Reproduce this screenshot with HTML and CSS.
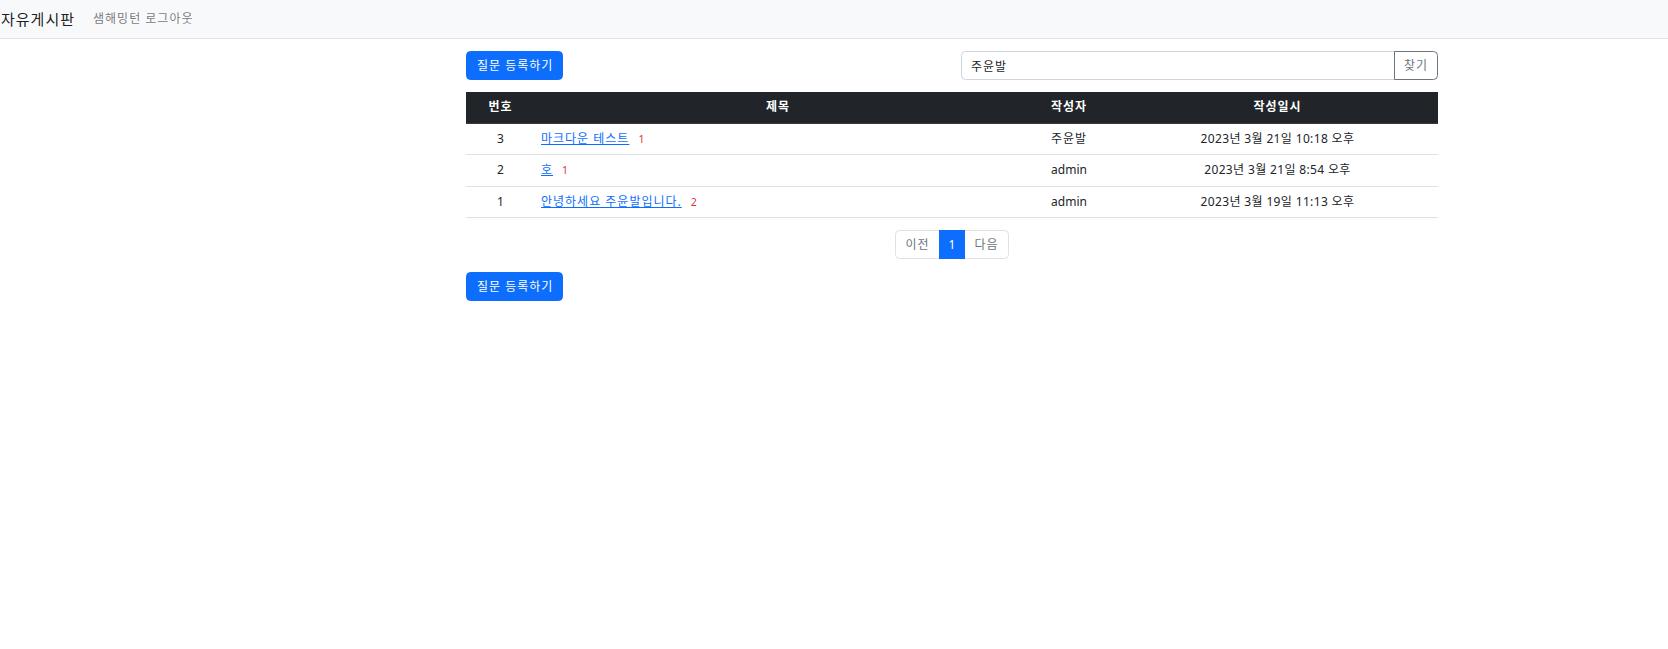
FILE: index.html
```html
<!DOCTYPE html>
<html lang="ko">
<head>
<meta charset="utf-8">
<title>자유게시판</title>
<link rel="stylesheet" href="styles.css">
</head>
<body>
<nav class="navbar">
  <a class="brand ko" href="#">자유게시판</a>
  <a class="nav-link ko" href="#">샘해밍턴 로그아웃</a>
</nav>
<main class="container">
  <div class="top-row">
    <a class="btn btn-primary ko" href="#">질문 등록하기</a>
    <div class="input-group">
      <input class="search-input ko" type="text" value="주윤발">
      <button class="btn btn-outline ko">찾기</button>
    </div>
  </div>
  <table class="board">
    <thead>
      <tr class="ko">
        <th class="c-num">번호</th>
        <th class="c-title">제목</th>
        <th class="c-author">작성자</th>
        <th class="c-date">작성일시</th>
      </tr>
    </thead>
    <tbody>
      <tr>
        <td class="center">3</td>
        <td class="left"><a class="ko" href="#">마크다운 테스트</a><span class="count">1</span></td>
        <td class="center ko">주윤발</td>
        <td class="center date">2023년 3월 21일 10:18 오후</td>
      </tr>
      <tr>
        <td class="center">2</td>
        <td class="left"><a class="ko" href="#">호</a><span class="count">1</span></td>
        <td class="center">admin</td>
        <td class="center date">2023년 3월 21일 8:54 오후</td>
      </tr>
      <tr>
        <td class="center">1</td>
        <td class="left"><a class="ko" href="#">안녕하세요 주윤발입니다.</a><span class="count">2</span></td>
        <td class="center">admin</td>
        <td class="center date">2023년 3월 19일 11:13 오후</td>
      </tr>
    </tbody>
  </table>
  <ul class="pagination">
    <li class="page-item disabled"><span class="page-link ko">이전</span></li>
    <li class="page-item active"><span class="page-link">1</span></li>
    <li class="page-item disabled"><span class="page-link ko">다음</span></li>
  </ul>
  <a class="btn btn-primary ko" href="#">질문 등록하기</a>
</main>
</body>
</html>
```
FILE: styles.css
```css
* { box-sizing: border-box; }
html, body { margin: 0; padding: 0; background: #fff; }
body {
  font-family: "Noto Sans", "Noto Sans CJK KR", sans-serif;
  font-size: 12px;
  line-height: 18px;
  color: #212529;
}
a { color: #0d6efd; }
.ko { letter-spacing: 1px; }
.date { letter-spacing: 0.35px; }

.navbar {
  display: flex;
  align-items: center;
  height: 39px;
  background: #f8f9fa;
  border-bottom: 1px solid #dee2e6;
  padding-left: 1px;
}
.brand {
  font-size: 15px;
  line-height: 22px;
  color: rgba(0,0,0,.9);
  text-decoration: none;
  margin-right: 12px;
}
.nav-link {
  color: rgba(0,0,0,.55);
  text-decoration: none;
  padding: 6px;
}

.container {
  width: 990px;
  padding: 0 9px;
  margin: 12px 0 0 457px;
}
.top-row {
  display: flex;
  justify-content: space-between;
  align-items: flex-start;
  margin-bottom: 12px;
}
.btn {
  display: inline-block;
  font-family: inherit;
  font-size: 12px;
  line-height: 18px;
  padding: 4.5px 9px;
  border: 1px solid transparent;
  border-radius: 4.5px;
  text-decoration: none;
  cursor: pointer;
}
.btn-primary {
  background: #0d6efd;
  border-color: #0d6efd;
  color: #fff;
  padding: 4.5px 9px 4.5px 10px;
}
.input-group {
  display: flex;
  width: 477px;
}
.search-input {
  flex: 1;
  min-width: 0;
  font-family: inherit;
  font-size: 12px;
  line-height: 18px;
  padding: 4.5px 9px;
  color: #212529;
  border: 1px solid #ced4da;
  border-radius: 4.5px 0 0 4.5px;
  outline: none;
  height: 29px;
}
.btn-outline {
  background: #fff;
  color: #6c757d;
  border-color: #6c757d;
  border-radius: 0 4.5px 4.5px 0;
  margin-left: -1px;
  height: 29px;
  width: 44px;
  padding: 4.5px 0;
}

.board {
  width: 100%;
  border-collapse: collapse;
  margin-bottom: 12px;
  table-layout: fixed;
}
.board th {
  background: #212529;
  color: #fff;
  font-weight: 700;
  text-align: center;
  padding: 6px;
  height: 31px;
  line-height: 18px;
  border-bottom: 1px solid #373b3e;
}
.board td {
  padding: 6px;
  height: 31.5px;
  line-height: 18px;
  border-bottom: 1px solid #dee2e6;
}
.c-num { width: 69px; }
.c-title { width: 486px; }
.c-author { width: 96px; }
.c-date { width: 321px; }
.center { text-align: center; }
.left { text-align: left; }
.count {
  color: #dc3545;
  font-size: 10.5px;
  line-height: 0;
  margin-left: 9px;
}

.pagination {
  display: flex;
  justify-content: center;
  list-style: none;
  margin: 0 0 13px;
  padding: 0;
}
.page-link {
  display: block;
  padding: 4.5px 9px;
  border: 1px solid #dee2e6;
  line-height: 18px;
  color: #6c757d;
  background: #fff;
}
.page-item + .page-item .page-link { margin-left: -1px; }
.page-item:first-child .page-link { border-radius: 4.5px 0 0 4.5px; }
.page-item:last-child .page-link { border-radius: 0 4.5px 4.5px 0; }
.page-item.active .page-link {
  background: #0d6efd;
  border-color: #0d6efd;
  color: #fff;
  position: relative;
}
```
